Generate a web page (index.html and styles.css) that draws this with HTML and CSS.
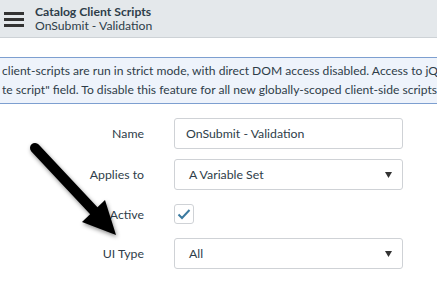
FILE: index.html
```html
<!DOCTYPE html>
<html>
<head>
<meta charset="utf-8">
<link rel="stylesheet" href="styles.css">
</head>
<body>
<header class="header">
  <svg class="burger" width="20" height="16" viewBox="0 0 20 16"><rect x="0" y="1" width="20" height="3" fill="#333"/><rect x="0" y="7" width="20" height="3" fill="#333"/><rect x="0" y="13" width="20" height="3" fill="#333"/></svg>
  <div class="titles">
    <div class="title">Catalog Client Scripts</div>
    <div class="subtitle">OnSubmit - Validation</div>
  </div>
</header>
<div class="info">
  <div class="line">client-scripts are run in strict mode, with direct DOM access disabled. Access to jQuery, prototype and the window object are likewise disabled.</div>
  <div class="line">te script" field. To disable this feature for all new globally-scoped client-side scripts set the system property</div>
</div>
<div class="form">
  <div class="label">Name</div>
  <div class="field"><div class="input">OnSubmit - Validation</div></div>
  <div class="label">Applies to</div>
  <div class="field"><div class="input select">A Variable Set<svg class="caret" width="7" height="6" viewBox="0 0 7 6"><path d="M0 0H7L3.5 6Z" fill="#333"/></svg></div></div>
  <div class="label label-check">Active</div>
  <div class="field field-check"><div class="checkbox"><svg width="14" height="12" viewBox="0 0 14 12"><path d="M1.5 6.5L5 10L12.5 2" fill="none" stroke="#3b7aa0" stroke-width="2"/></svg></div></div>
  <div class="label">UI Type</div>
  <div class="field"><div class="input select">All<svg class="caret" width="7" height="6" viewBox="0 0 7 6"><path d="M0 0H7L3.5 6Z" fill="#333"/></svg></div></div>
</div>
<svg class="arrow" width="140" height="120" viewBox="0 0 140 120">
  <defs><filter id="sh" x="-20%" y="-20%" width="140%" height="140%"><feDropShadow dx="1" dy="2" stdDeviation="2" flood-color="#000" flood-opacity="0.45"/></filter></defs>
  <g filter="url(#sh)">
    <line x1="13" y1="18" x2="73" y2="82" stroke="#000" stroke-width="10" stroke-linecap="round"/>
    <path d="M60 92L83 70L94 105Z" fill="#000"/>
  </g>
</svg>
</body>
</html>
```
FILE: styles.css
```css
html, body {
  margin: 0;
  padding: 0;
}
body {
  width: 437px;
  height: 292px;
  overflow: hidden;
  position: relative;
  background: #fff;
  font-family: Lato, "Open Sans", sans-serif;
  color: #2e3d49;
}
.header {
  height: 37px;
  background: #e4e8eb;
  border-bottom: 1px solid #cdd2d6;
  display: flex;
  align-items: center;
  padding-left: 4px;
}
.burger {
  display: block;
  margin-top: 1px;
}
.titles {
  margin-left: 11px;
  font-size: 12.2px;
  line-height: 14px;
  color: #2e3d49;
}
.title {
  font-weight: 700;
}
.info {
  margin-top: 19px;
  margin-left: -10px;
  width: 700px;
  background: #eef3fb;
  border: 1px solid #7d9fd0;
  padding: 3px 0 4px 11px;
  font-size: 12.1px;
  line-height: 19px;
  color: #2e3d49;
}
.line {
  white-space: nowrap;
}
.form {
  margin-top: 14px;
  display: grid;
  grid-template-columns: 144px 229px;
  column-gap: 30px;
  row-gap: 10px;
  font-size: 12.3px;
}
.label {
  text-align: right;
  display: flex;
  align-items: center;
  justify-content: flex-end;
}
.input {
  height: 29px;
  border: 1px solid #cfd2d6;
  border-radius: 3px;
  display: flex;
  align-items: center;
  padding-left: 11px;
  padding-right: 10px;
}
.select {
  justify-content: space-between;
  padding-left: 14px;
}
.caret {
  display: block;
}
.field-check {
  padding: 4px 0;
}
.checkbox {
  width: 18px;
  height: 18px;
  border: 1px solid #cfd2d6;
  border-radius: 3px;
  display: flex;
  align-items: center;
  justify-content: center;
}
.arrow {
  position: absolute;
  left: 22px;
  top: 130px;
}
```
